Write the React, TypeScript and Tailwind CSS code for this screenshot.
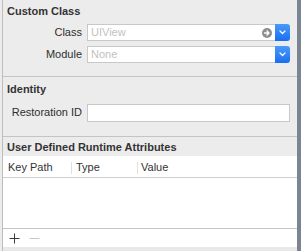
import React from 'react'

function BlueButton() {
  return (
    <div className="w-[15px] h-full rounded-r-[3px] bg-gradient-to-b from-[#4a9af8] to-[#176ff0] flex items-center justify-center">
      <svg width="7" height="5" viewBox="0 0 7 5" fill="none">
        <path d="M1 1l2.5 2.5L6 1" stroke="white" strokeWidth="1.2" strokeLinecap="round" strokeLinejoin="round" />
      </svg>
    </div>
  )
}

function Row({ label, children }: { label: string; children: React.ReactNode }) {
  return (
    <div className="flex items-center h-[17px]">
      <div className="w-[84px] shrink-0 pr-[5px] text-right text-[11px] text-[#2e2e2e] leading-none whitespace-nowrap">{label}</div>
      {children}
    </div>
  )
}

export default function App() {
  return (
    <div
      className="w-[301px] h-[251px] bg-[#ececec] flex overflow-hidden"
      style={{ fontFamily: '"Liberation Sans", Arial, sans-serif' }}
    >
      <div className="w-[2px] shrink-0 bg-[#ececec]" />
      <div className="w-[1px] shrink-0 bg-[#bdbdbd]" />
      <div className="flex-1 flex flex-col">
        {/* Custom Class */}
        <div className="h-[77px] border-b border-[#c4c4c4]">
          <div className="pt-[4px] pl-[4px] h-[18px] text-[11px] font-bold text-[#333] leading-[14px]">Custom Class</div>
          <div className="mt-[6px] flex flex-col gap-[5px]">
            <Row label="Class">
              <div className="w-[203px] h-[17px] flex">
                <div className="flex-1 bg-white border border-r-0 border-[#c8c8c8] flex items-center pl-[3px] pr-[3px]">
                  <span className="flex-1 text-[11px] text-[#c2c2c2] leading-none">UIView</span>
                  <svg width="10" height="10" viewBox="0 0 10 10">
                    <circle cx="5" cy="5" r="5" fill="#8e8e8e" />
                    <path d="M2.5 5h4.5M5 3l2 2-2 2" stroke="white" strokeWidth="1.3" fill="none" strokeLinecap="round" strokeLinejoin="round" />
                  </svg>
                </div>
                <BlueButton />
              </div>
            </Row>
            <Row label="Module">
              <div className="w-[203px] h-[17px] flex">
                <div className="flex-1 bg-white border border-r-0 border-[#c8c8c8] flex items-center pl-[3px]">
                  <span className="text-[11px] text-[#c2c2c2] leading-none">None</span>
                </div>
                <BlueButton />
              </div>
            </Row>
          </div>
        </div>

        {/* Identity */}
        <div className="h-[60px] border-b border-[#c4c4c4]">
          <div className="pt-[5px] pl-[4px] h-[19px] text-[11px] font-bold text-[#333] leading-[14px]">Identity</div>
          <div className="mt-[8px]">
            <Row label="Restoration ID">
              <div className="w-[203px] h-[18px] bg-white border border-[#c8c8c8]" />
            </Row>
          </div>
        </div>

        {/* User Defined Runtime Attributes */}
        <div className="flex-1 flex flex-col">
          <div className="pt-[3px] pl-[4px] h-[19px] text-[11px] font-bold text-[#333] leading-[14px] whitespace-nowrap">
            User Defined Runtime Attributes
          </div>
          <div className="bg-white flex flex-col h-[91px]">
            <div className="h-[22px] border-b border-[#cfcfcf] flex items-center pt-[2px] text-[11px] text-[#333] leading-none">
              <div className="w-[68px] pl-[5px]">Key Path</div>
              <div className="w-[1px] h-[12px] bg-[#e0e0e0]" />
              <div className="w-[65px] pl-[4px]">Type</div>
              <div className="w-[1px] h-[12px] bg-[#e0e0e0]" />
              <div className="pl-[3px]">Value</div>
            </div>
            <div className="flex-1 border-b border-[#c4c4c4]" />
            <div className="h-[18px] flex items-center pl-[6px] gap-[9px]">
              <svg width="11" height="11" viewBox="0 0 11 11">
                <path d="M5.5 0.5v10M0.5 5.5h10" stroke="#3a3a3a" strokeWidth="1" />
              </svg>
              <svg width="11" height="11" viewBox="0 0 11 11">
                <path d="M0.5 5.5h10" stroke="#c8c8c8" strokeWidth="1" />
              </svg>
            </div>
          </div>
          <div className="flex-1 bg-[#e8e8e8]" />
        </div>
      </div>
      <div className="w-[4px] shrink-0 bg-[#7d8491]" />
    </div>
  )
}
